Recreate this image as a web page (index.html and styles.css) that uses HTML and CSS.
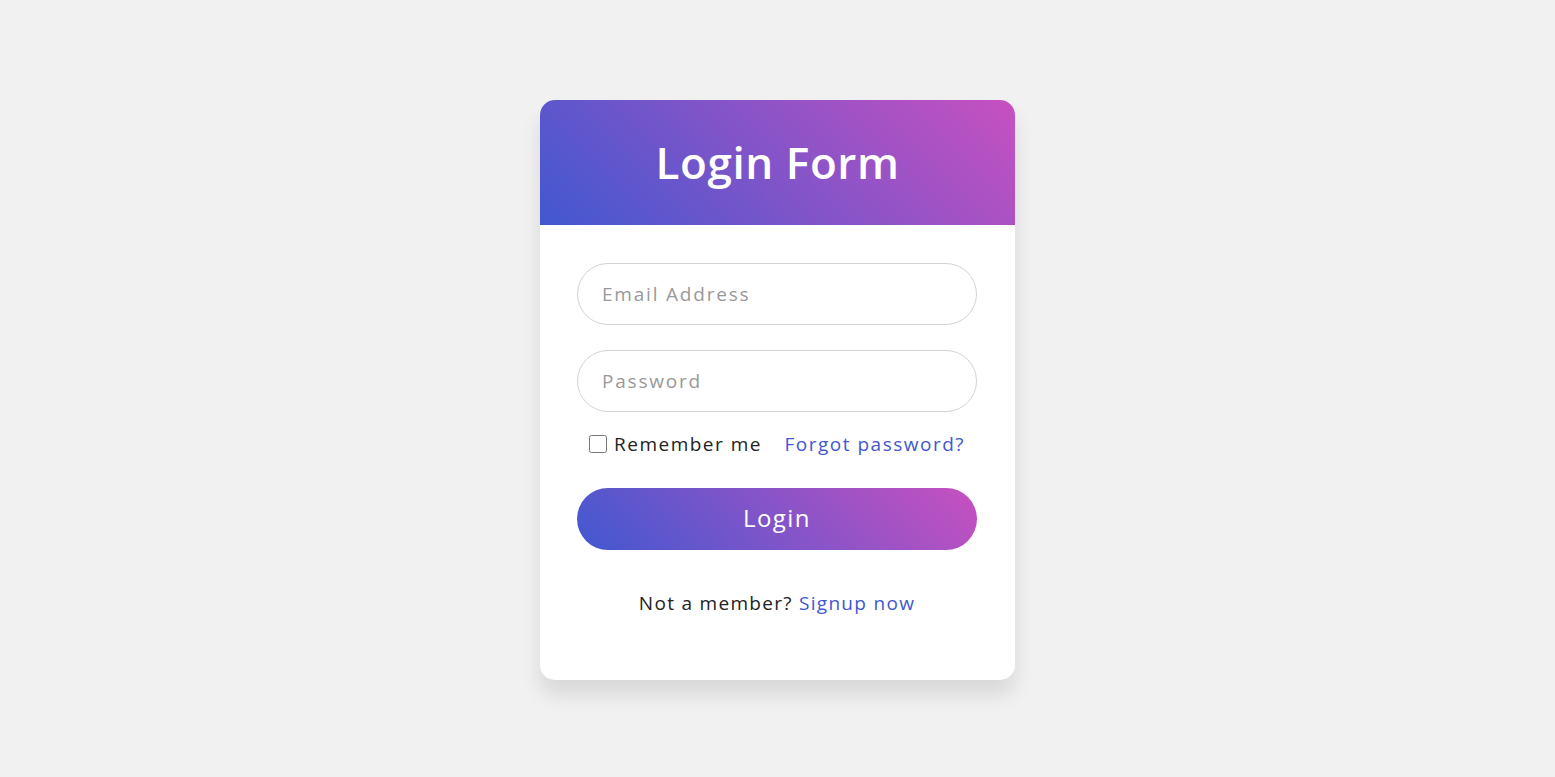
FILE: index.html
```html
<!DOCTYPE html>
<html lang="en">
<head>
<meta charset="utf-8">
<title>Login Form</title>
<link rel="stylesheet" href="styles.css">
</head>
<body>
<main class="page">
  <div class="card">
    <div class="card-header">
      <h1 class="title">Login Form</h1>
    </div>
    <form class="card-body">
      <input class="field" type="text" placeholder="Email Address">
      <input class="field" type="password" placeholder="Password">
      <div class="options">
        <label class="remember"><input type="checkbox" class="check"> Remember me</label>
        <a href="#" class="link">Forgot password?</a>
      </div>
      <button type="button" class="btn">Login</button>
      <p class="signup">Not a member? <a href="#" class="link">Signup now</a></p>
    </form>
  </div>
</main>
</body>
</html>
```

FILE: styles.css
```css
* { box-sizing: border-box; }
html, body { margin: 0; padding: 0; }
body {
  background: #f1f1f1;
  font-family: "Open Sans", "DejaVu Sans", sans-serif;
  height: 777px;
}
.page {
  display: flex;
  justify-content: center;
  padding-top: 100px;
}
.card {
  width: 475px;
  height: 580px;
  background: #fff;
  border-radius: 15px;
  overflow: hidden;
  box-shadow: 0 15px 20px rgba(0,0,0,0.1);
}
.card-header {
  height: 125px;
  display: flex;
  align-items: center;
  justify-content: center;
  padding-bottom: 2px;
  background: linear-gradient(-135deg, #c850c0, #4158d0);
}
.title {
  margin: 0;
  color: #fff;
  font-size: 44px;
  font-weight: 600;
  letter-spacing: 0.6px;
}
.card-body {
  display: flex;
  flex-direction: column;
  padding: 38px 38px 0 37px;
  margin: 0;
}
.field {
  height: 62px;
  width: 100%;
  border: 1px solid lightgrey;
  border-radius: 31px;
  padding: 0 24px;
  font-family: inherit;
  font-size: 19px;
  letter-spacing: 1.8px;
  color: #333;
  outline: none;
}
.field + .field { margin-top: 25px; }
.field::placeholder { color: #999; }
.options {
  display: flex;
  justify-content: space-between;
  align-items: center;
  padding: 0 12px;
  margin-top: 19px;
  height: 26px;
  font-size: 19px;
  letter-spacing: 1.5px;
}
.remember {
  display: flex;
  align-items: center;
  color: #222;
}
.check {
  width: 18px;
  height: 18px;
  margin: 0 7px 0 0;
}
.link {
  color: #4158d0;
  text-decoration: none;
}
.btn {
  margin-top: 31px;
  height: 62px;
  padding: 0 0 4px;
  border: none;
  border-radius: 31px;
  background: linear-gradient(-135deg, #c850c0, #4158d0);
  color: #fff;
  font-family: inherit;
  font-size: 24px;
  font-weight: 500;
  letter-spacing: 1.4px;
}
.signup {
  margin: 40px 0 0;
  text-align: center;
  font-size: 19px;
  letter-spacing: 1.3px;
  color: #222;
}
```
